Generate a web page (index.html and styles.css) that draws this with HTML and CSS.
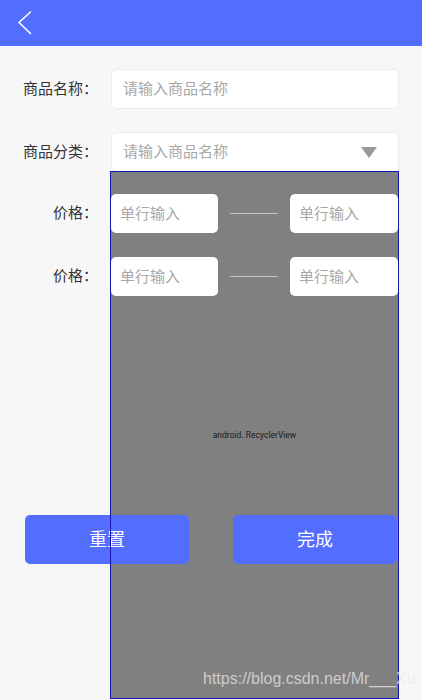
FILE: index.html
```html
<!DOCTYPE html>
<html lang="zh-CN">
<head>
<meta charset="utf-8">
<title>商品筛选</title>
<link rel="stylesheet" href="styles.css">
</head>
<body>
<div class="screen">
  <header class="topbar">
    <svg class="back" width="16" height="24" viewBox="0 0 16 24">
      <polyline points="13.5,1 2,11.5 13.5,22.5" fill="none" stroke="#fff" stroke-width="1.6" stroke-linecap="round" stroke-linejoin="round"/>
    </svg>
  </header>

  <div class="rv-fill"><span class="rv-name">android..RecyclerView</span></div>

  <main class="form">
    <div class="row">
      <span class="label">商品名称：</span>
      <div class="field"><span class="ph">请输入商品名称</span></div>
    </div>
    <div class="row">
      <span class="label">商品分类：</span>
      <div class="field select"><span class="ph">请输入商品名称</span><span class="tri"></span></div>
    </div>
    <div class="row price-row">
      <span class="label">价格：</span>
      <div class="range">
        <div class="field small"><span class="ph">单行输入</span></div>
        <span class="dash"></span>
        <div class="field small"><span class="ph">单行输入</span></div>
      </div>
    </div>
    <div class="row price-row">
      <span class="label">价格：</span>
      <div class="range">
        <div class="field small"><span class="ph">单行输入</span></div>
        <span class="dash"></span>
        <div class="field small"><span class="ph">单行输入</span></div>
      </div>
    </div>

    <div class="actions">
      <button class="btn">重置</button>
      <button class="btn">完成</button>
    </div>
  </main>

  <div class="rv-frame"></div>
  <div class="watermark">https://blog.csdn.net/Mr___Xu</div>
</div>
</body>
</html>
```

FILE: styles.css
```css
html, body {
  margin: 0;
  padding: 0;
}
body {
  background: #f7f7f7;
  font-family: "Noto Sans CJK SC", "Noto Sans", sans-serif;
}
.screen {
  position: relative;
  width: 422px;
  height: 700px;
  overflow: hidden;
  background: #f7f7f7;
}
.topbar {
  height: 46px;
  background: #536dfe;
  display: flex;
  align-items: center;
  padding-left: 17px;
}
.back {
  display: block;
}
.form {
  position: relative;
  z-index: 1;
  padding-top: 23px;
  display: flex;
  flex-direction: column;
}
.row {
  display: flex;
  align-items: center;
  height: 40px;
  margin-bottom: 23px;
}
.row:nth-child(2) {
  margin-bottom: 22px;
}
.price-row {
  height: 39px;
  margin-bottom: 24px;
}
.price-row + .price-row {
  margin-bottom: 0;
}
.label {
  box-sizing: border-box;
  width: 75px;
  margin-left: 23px;
  margin-right: 13px;
  padding-bottom: 4px;
  text-align: right;
  font-size: 15px;
  color: #333;
  white-space: nowrap;
}
.field {
  box-sizing: border-box;
  width: 288px;
  height: 40px;
  background: #fff;
  border: 1px solid #ececec;
  border-radius: 5px;
  display: flex;
  align-items: center;
  padding-left: 11px;
  padding-bottom: 3px;
}
.ph {
  font-size: 15px;
  color: #a8a8a8;
  white-space: nowrap;
}
.select {
  justify-content: space-between;
  padding-right: 21px;
  padding-bottom: 0;
}
.select .ph {
  padding-bottom: 3px;
}
.tri {
  width: 0;
  height: 0;
  border-left: 8.5px solid transparent;
  border-right: 8.5px solid transparent;
  border-top: 11px solid #999;
}
.range {
  display: flex;
  align-items: center;
  width: 287px;
}
.field.small {
  width: 107px;
  height: 39px;
  border: none;
  padding-left: 9px;
}
.field.small:last-child {
  width: 108px;
}
.dash {
  flex: 1;
  height: 1px;
  margin: 0 12px;
  background: #c4c4c4;
}
.actions {
  display: flex;
  justify-content: space-between;
  margin: 219px 25px 0 25px;
}
.btn {
  width: 164px;
  height: 49px;
  border: none;
  border-radius: 5px;
  background: #536dfe;
  color: #fff;
  font-family: "Noto Sans CJK SC", sans-serif;
  font-size: 18px;
  padding: 0 0 4px 0;
}
.rv-fill {
  position: absolute;
  z-index: 0;
  left: 110px;
  top: 171px;
  width: 289px;
  height: 528px;
  background: #808080;
  display: flex;
  justify-content: center;
}
.rv-name {
  margin-top: 259px;
  font-family: Roboto, "Liberation Sans", sans-serif;
  font-size: 8.5px;
  color: #1a1a1a;
}
.rv-frame {
  position: absolute;
  z-index: 2;
  left: 110px;
  top: 171px;
  width: 287px;
  height: 526px;
  border: 1px solid #1414a8;
  pointer-events: none;
}
.watermark {
  position: absolute;
  z-index: 3;
  left: 203px;
  top: 670px;
  font-family: "Liberation Sans", Arial, sans-serif;
  font-size: 16px;
  color: rgba(235, 235, 235, 0.72);
  white-space: nowrap;
}
```
